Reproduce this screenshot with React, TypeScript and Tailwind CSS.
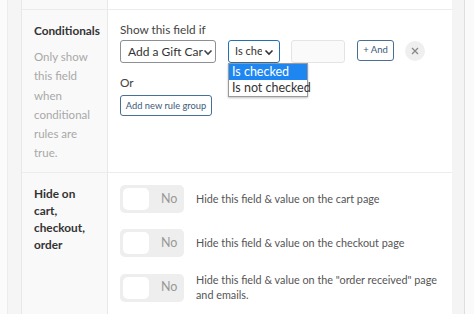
import React from 'react';

const font = { fontFamily: 'Lato, "Noto Sans", sans-serif' };

const Toggle = () => (
  <div className="flex h-[28px] w-[64px] shrink-0 items-center rounded-[5px] bg-[#eeeeee] pl-[3px]">
    <div className="h-[22px] w-[26px] rounded-[5px] bg-white" />
    <span className="ml-[12px] text-[12.5px] text-[#999]">No</span>
  </div>
);

const HideRow = ({ children, className = '' }: { children: React.ReactNode; className?: string }) => (
  <div className={`flex items-center gap-[12px] ${className}`}>
    <Toggle />
    <p className="text-[10.8px] leading-[14.5px] text-[#555]">{children}</p>
  </div>
);

export default function App() {
  return (
    <div className="flex h-[314px] w-[474px] overflow-hidden bg-white" style={font}>
      <div className="w-[8px] shrink-0 border-r border-[#ececec] bg-[#fbfbfb]" />
      <div className="w-[14px] shrink-0 border-r border-[#e8e8e8] bg-[#f5f5f5]" />

      <div className="flex w-[430px] shrink-0 flex-col">
        <div className="grid h-[10px] shrink-0 grid-cols-[86px_1fr] border-b border-[#ececec]">
          <div className="border-r border-[#e8e8e8] bg-[#f9f9f9]" />
          <div />
        </div>

        {/* Conditionals */}
        <div className="grid h-[163px] shrink-0 grid-cols-[86px_1fr] border-b border-[#ececec]">
          <div className="border-r border-[#e8e8e8] bg-[#f9f9f9] pl-[12px] pt-[12px]">
            <h3 className="text-[11.8px] font-bold leading-[17px] text-[#333]">Conditionals</h3>
            <p className="mt-[8px] text-[11.5px] leading-[19.3px] text-[#a8a8a8]">
              Only show
              <br />
              this field
              <br />
              when
              <br />
              conditional
              <br />
              rules are
              <br />
              true.
            </p>
          </div>
          <div className="pl-[12px] pt-[11px] text-[#444]">
            <div className="text-[11.8px] leading-[17px]">Show this field if</div>
            <div className="mt-[2px] flex items-start">
              <div className="flex h-[23px] w-[96px] items-center justify-between rounded-[3px] border border-[#8c8f94] pl-[7px] pr-[5px] text-[12px] text-[#333]">
                <span className="whitespace-nowrap">Add a Gift Car</span>
                <svg width="10" height="10" viewBox="0 0 10 10" className="shrink-0">
                  <path d="M1.5 3.5 L5 7 L8.5 3.5" fill="none" stroke="#444" strokeWidth="1.6" />
                </svg>
              </div>
              <div className="relative ml-[12px]">
                <div className="flex h-[23px] w-[52px] items-center rounded-[3px] border border-[#2271b1] pl-[6px] pr-[4px] text-[11px] text-[#333]">
                  <span className="w-[27px] overflow-hidden whitespace-nowrap">Is checked</span>
                  <svg width="10" height="10" viewBox="0 0 10 10" className="ml-[2px] shrink-0">
                    <path d="M1.5 3.5 L5 7 L8.5 3.5" fill="none" stroke="#333" strokeWidth="1.6" />
                  </svg>
                </div>
                <div className="absolute left-0 top-[23px] w-[80px] border border-[#9a9a9a] bg-white text-[12.5px] leading-[16px] shadow-[0_1px_2px_rgba(0,0,0,0.25)]">
                  <div className="bg-[#1e86f0] pl-[3px] text-white">Is checked</div>
                  <div className="whitespace-nowrap pl-[3px] text-[#333]">Is not checked</div>
                </div>
              </div>
              <div className="ml-[11px] h-[23px] w-[54px] rounded-[3px] border border-[#e4e4e4] bg-[#fafafa]" />
              <button className="ml-[12px] h-[21px] w-[37px] rounded-[3px] border border-[#4a6f94] text-[9.5px] text-[#3d5a78]">
                + And
              </button>
              <div className="ml-[11px] mt-[1px] flex h-[20px] w-[20px] items-center justify-center rounded-full bg-[#efefef]">
                <svg width="8" height="8" viewBox="0 0 8 8">
                  <path d="M1 1 L7 7 M7 1 L1 7" stroke="#888" strokeWidth="1.3" />
                </svg>
              </div>
            </div>
            <div className="mt-[11px] text-[11.8px] leading-[17px]">Or</div>
            <button className="mt-[4px] h-[21px] w-[92px] rounded-[3px] border border-[#4a6f94] text-[9.3px] text-[#3d5a78]">
              Add new rule group
            </button>
          </div>
        </div>

        {/* Hide on cart */}
        <div className="grid flex-1 grid-cols-[86px_1fr]">
          <div className="border-r border-[#e8e8e8] bg-[#f9f9f9] pl-[12px] pt-[12px]">
            <h3 className="text-[11.8px] font-bold leading-[17px] text-[#333]">
              Hide on
              <br />
              cart,
              <br />
              checkout,
              <br />
              order
            </h3>
          </div>
          <div className="flex flex-col pl-[12px] pt-[12px]">
            <HideRow>Hide this field &amp; value on the cart page</HideRow>
            <HideRow className="mt-[16px]">Hide this field &amp; value on the checkout page</HideRow>
            <HideRow className="mt-[16px]">
              Hide this field &amp; value on the "order received" page and emails.
            </HideRow>
          </div>
        </div>
      </div>

      <div className="w-[13px] shrink-0 border-r border-[#dedede] bg-[#f4f4f4]" />
      <div className="flex-1 bg-[#fafafa]" />
    </div>
  );
}
